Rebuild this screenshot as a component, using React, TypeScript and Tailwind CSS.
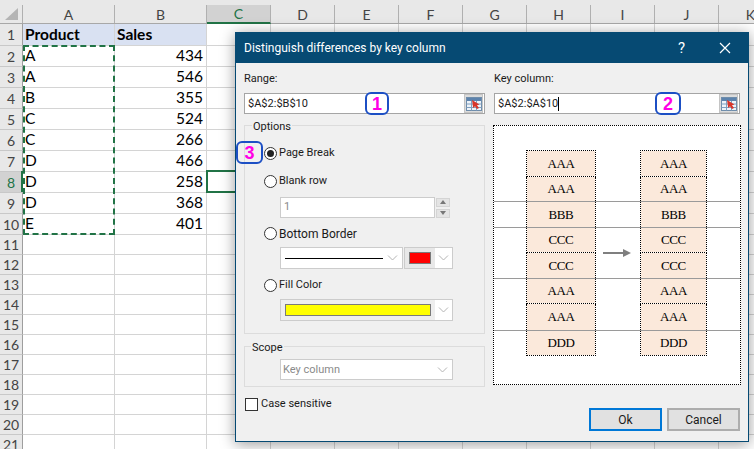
const cols = [
  { n: "A", w: "w-[92px]" },
  { n: "B", w: "w-[92px]" },
  { n: "C", w: "w-[64px]" },
  { n: "D", w: "w-[64px]" },
  { n: "E", w: "w-[64px]" },
  { n: "F", w: "w-[64px]" },
  { n: "G", w: "w-[64px]" },
  { n: "H", w: "w-[64px]" },
  { n: "I", w: "w-[64px]" },
  { n: "J", w: "w-[64px]" },
  { n: "K", w: "w-[64px]" },
];

const data: [string, string, boolean?][] = [
  ["Product", "Sales", true],
  ["A", "434"],
  ["A", "546"],
  ["B", "355"],
  ["C", "524"],
  ["C", "266"],
  ["D", "466"],
  ["D", "258"],
  ["D", "368"],
  ["E", "401"],
];

function Row({ i }: { i: number }) {
  const row = data[i - 1];
  const h = i === 1 ? "h-[22px]" : i <= 10 ? "h-[21px]" : "h-[20px]";
  return (
    <div className={`flex shrink-0 ${h}`}>
      <div
        className={`w-[23px] shrink-0 flex items-center justify-center text-[14px] border-r border-b border-r-[#9e9e9e] border-b-[#c8c8c8] ${
          i === 8 ? "bg-[#d2d2d2] text-[#217346]" : "bg-[#e8e8e8] text-[#444444]"
        }`}
      >
        {i}
      </div>
      {cols.map((c, ci) => (
        <div
          key={c.n}
          className={`${c.w} shrink-0 border-r border-b border-[#d4d4d4] flex items-center px-[2px] overflow-hidden text-[15.5px] text-black ${
            row?.[2] && ci < 2 ? "bg-[#d9e1f2] font-bold" : "bg-white"
          } ${ci === 1 && !row?.[2] ? "justify-end pr-[3px]" : ""}`}
        >
          {row && ci === 0 ? row[0] : row && ci === 1 ? row[1] : ""}
        </div>
      ))}
    </div>
  );
}

function Chevron() {
  return (
    <svg width="11" height="6" viewBox="0 0 11 6" className="shrink-0">
      <path d="M1 0.5 L5.5 5 L10 0.5" fill="none" stroke="#b4b4b4" strokeWidth="1" />
    </svg>
  );
}

function RefIcon({ className }: { className: string }) {
  return (
    <div className={`absolute w-[19px] h-[19px] bg-[#dcdcdc] border border-[#c4c4c4] flex items-center justify-center ${className}`}>
      <svg width="16" height="14" viewBox="0 0 16 14">
        <rect x="0.5" y="0.5" width="15" height="13" fill="#eef3f9" stroke="#6f8dab" />
        <rect x="1" y="1" width="14" height="3" fill="#5d83ad" />
        <path d="M0.5 7H15.5M0.5 10.5H15.5M5.5 4V13.5M10.5 4V13.5" stroke="#7f9fbf" strokeWidth="1" />
        <path d="M6 3 L13.5 7.5 L11 8.2 L13 11 L11 12 L9 9.3 L7.2 11 Z" fill="#d8352a" />
      </svg>
    </div>
  );
}

function Badge({ n, className }: { n: string; className: string }) {
  return (
    <div
      className={`absolute h-[23px] border-2 border-[#1c4fc4] rounded-[6px] flex items-center justify-center text-[#ff00e6] font-bold text-[18px] leading-none ${className}`}
      style={{ fontFamily: "'Liberation Sans', sans-serif" }}
    >
      {n}
    </div>
  );
}

function Radio({ on, label, className, labelClass }: { on?: boolean; label: string; className: string; labelClass?: string }) {
  return (
    <div className={`flex items-center h-4 ml-[19px] ${className}`}>
      <div className="w-[13px] h-[13px] rounded-full border border-[#333333] bg-white flex items-center justify-center">
        {on && <div className="w-[7px] h-[7px] rounded-full bg-[#222222]" />}
      </div>
      <span className={`ml-[2px] pt-px ${labelClass ?? ""}`}>{label}</span>
    </div>
  );
}

const previewRows = [
  { t: "AAA", h: "h-[27px]", line: "dot" },
  { t: "AAA", h: "h-[25px]", line: "gray" },
  { t: "BBB", h: "h-[26px]", line: "gray" },
  { t: "CCC", h: "h-[25px]", line: "dot" },
  { t: "CCC", h: "h-[26px]", line: "gray", arrow: true },
  { t: "AAA", h: "h-[25px]", line: "dot" },
  { t: "AAA", h: "h-[27px]", line: "gray" },
  { t: "DDD", h: "h-[25px]", line: "none" },
];

function PreviewCell({ t, line, w, first }: { t: string; line: string; w: string; first: boolean }) {
  return (
    <div
      className={`${w} shrink-0 bg-[#fbe9db] bg-clip-padding border-x border-dotted border-black flex items-center justify-center text-[13px] tracking-[-0.4px] text-black ${
        line === "dot" || line === "none" ? "border-b" : ""
      } ${first ? "border-t" : ""}`}
      style={{ fontFamily: "'Liberation Serif', serif" }}
    >
      {t}
    </div>
  );
}

export default function App() {
  const rows = Array.from({ length: 21 }, (_, i) => i + 1);
  return (
    <div
      className="relative w-[754px] h-[449px] overflow-hidden bg-white"
      style={{ fontFamily: "Lato, sans-serif" }}
    >
      <div className="flex h-[24px] bg-[#e8e8e8] border-b border-[#a8a8a8]">
        <div className="w-[23px] shrink-0 flex items-end justify-center pb-[3px] border-r border-[#b0b0b0] mt-[5px]">
          <svg width="13" height="12" viewBox="0 0 13 12">
            <path d="M13 0 V12 H0 Z" fill="#b4b4b4" />
          </svg>
        </div>
        {cols.map((c) => (
          <div
            key={c.n}
            className={`${c.w} shrink-0 mt-[5px] flex items-center justify-center text-[14px] border-r border-[#b0b0b0] ${
              c.n === "C" ? "bg-[#d2d2d2] text-[#217346] border-b-2 border-b-[#217346] -mb-px" : "text-[#444444]"
            }`}
          >
            {c.n}
          </div>
        ))}
      </div>
      <div className="flex flex-col">
        {rows.map((i) => (
          <Row key={i} i={i} />
        ))}
      </div>

      {/* marching ants on A2:A10 and the active cell C8 */}
      <div className="absolute left-[23px] top-[45px] w-[92px] h-[190px] border-2 border-dashed border-[#217346]" />
      <div className="absolute left-[206px] top-[170px] w-[66px] h-[23px] border-2 border-[#217346]" />
      <div className="absolute left-[21px] top-[171px] w-[2px] h-[21px] bg-[#217346]" />

      {/* dialog */}
      <div
        className="absolute left-[235px] top-[32px] w-[514px] h-[410px] bg-[#f0f0f0] border border-[#064a73] shadow-[0_2px_14px_rgba(0,0,0,0.4)] text-[11px] text-[#1a1a1a] flex flex-col"
        style={{ fontFamily: "Roboto, sans-serif" }}
      >
        <div className="h-[30px] shrink-0 bg-[#064a73] text-white flex items-center pl-[8px] text-[12px]">
          <span className="flex-1">Distinguish differences by key column</span>
          <span className="text-[15px] mr-[34px]">?</span>
          <svg width="12" height="12" viewBox="0 0 12 12" className="mr-[17px]">
            <path d="M1 1 L11 11 M11 1 L1 11" stroke="white" strokeWidth="1.2" />
          </svg>
        </div>
        <div className="flex pl-[8px] gap-[8px]">
          {/* left */}
          <div className="w-[241px] shrink-0 flex flex-col">
            <div className="h-4 mt-[8px]">Range:</div>
            <div className="relative h-[21px] mt-[6px] bg-white border border-[#a5a5a5] flex items-center pl-[3px] pt-px">
              $A$2:$B$10
              <Badge n="1" className="left-[120px] -top-[2px] w-[24px]" />
              <RefIcon className="right-[1px] top-0" />
            </div>
            <div className="relative h-[209px] mt-[11px] border border-[#dcdcdc] flex flex-col">
              <div className="h-4 -mt-[7px] ml-[7px] px-[1px] w-fit bg-[#f0f0f0]">Options</div>
              <Radio on label="Page Break" className="mt-[10px]" />
              <Badge n="3" className="-left-[9px] top-[15px] w-[27px]" />
              <Radio label="Blank row" className="mt-[12px]" />
              <div className="flex mt-[8px] ml-[35px] gap-[1px]">
                <div className="w-[155px] h-[21px] bg-white border border-[#cccccc] flex items-center pl-[3px] text-[#8a8a8a]">1</div>
                <div className="flex flex-col justify-center gap-[2px] w-[14px]">
                  <div className="h-[9px] bg-[#e4e4e4] border border-[#d4d4d4] flex items-center justify-center">
                    <div className="w-0 h-0 border-x-[3px] border-x-transparent border-b-[4px] border-b-[#777777]" />
                  </div>
                  <div className="h-[9px] bg-[#e4e4e4] border border-[#d4d4d4] flex items-center justify-center">
                    <div className="w-0 h-0 border-x-[3px] border-x-transparent border-t-[4px] border-t-[#777777]" />
                  </div>
                </div>
              </div>
              <Radio label="Bottom Border" labelClass="text-[12px]" className="mt-[7px]" />
              <div className="flex mt-[6px] ml-[35px] gap-[1px]">
                <div className="w-[123px] h-[22px] bg-white border border-[#cccccc] flex items-center pl-[4px] pr-[3px]">
                  <div className="w-[98px] h-px bg-black" />
                  <div className="flex-1 flex justify-end pr-px"><Chevron /></div>
                </div>
                <div className="w-[49px] h-[22px] bg-[#e8e8e8] border border-[#cccccc] flex items-center">
                  <div className="h-full flex items-center px-[4px]">
                    <div className="w-[22px] h-[12px] bg-[#ff0000] border border-[#7a7a7a]" />
                  </div>
                  <div className="flex-1 h-full bg-white flex items-center justify-center"><Chevron /></div>
                </div>
              </div>
              <Radio label="Fill Color" className="mt-[8px]" />
              <div className="mt-[6px] ml-[35px] w-[173px] h-[22px] bg-[#eeeeee] border border-[#cccccc] flex items-center">
                <div className="flex-1 h-full flex items-center pl-[4px] pr-[4px]">
                  <div className="w-full h-[12px] bg-[#ffff00] border border-[#7a7a7a]" />
                </div>
                <div className="w-[17px] h-full bg-white flex items-center justify-center shrink-0"><Chevron /></div>
              </div>
            </div>
            <div className="h-[41px] mt-[12px] border border-[#dcdcdc] flex flex-col">
              <div className="h-4 -mt-[7px] ml-[6px] px-[1px] w-fit bg-[#f0f0f0]">Scope</div>
              <div className="mt-[3px] ml-[35px] w-[173px] h-[21px] bg-white border border-[#cccccc] flex items-center justify-between pl-[2px] pr-[4px] pt-px text-[#8a8a8a]">
                Key column
                <Chevron />
              </div>
            </div>
            <div className="flex items-center h-4 mt-[9px] ml-px">
              <div className="w-[13px] h-[13px] bg-white border border-[#333333]" />
              <span className="ml-[3px] pt-px">Case sensitive</span>
            </div>
          </div>
          {/* right */}
          <div className="w-[248px] shrink-0 flex flex-col">
            <div className="h-4 mt-[8px] ml-px">Key column:</div>
            <div className="relative h-[21px] mt-[6px] mx-px bg-white border border-[#a5a5a5] flex items-center pl-[3px] pt-px">
              $A$2:$A$10
              <div className="w-px h-[14px] bg-black" />
              <Badge n="2" className="left-[160px] -top-[2px] w-[26px]" />
              <RefIcon className="right-[1px] top-0" />
            </div>
            <div className="h-[260px] mt-[11px] bg-white border border-dotted border-black pt-[24px] flex flex-col">
              {previewRows.map((r, i) => (
                <div
                  key={i}
                  className={`flex shrink-0 ${r.h} pl-[32px] ${r.line === "gray" ? "border-b border-[#9a9a9a]" : ""}`}
                >
                  <PreviewCell t={r.t} line={r.line} w="w-[70px]" first={i === 0} />
                  <div className="w-[44px] shrink-0 relative flex justify-center">
                    {r.arrow && (
                      <svg width="30" height="10" viewBox="0 0 30 10" className="-mt-[5px]">
                        <path d="M0 5 H22" stroke="#7f7f7f" strokeWidth="2" />
                        <path d="M20 1 L28 5 L20 9 Z" fill="#7f7f7f" />
                      </svg>
                    )}
                  </div>
                  <PreviewCell t={r.t} line={r.line} w="w-[67px]" first={i === 0} />
                </div>
              ))}
            </div>
            <div className="flex justify-end gap-[5px] mt-[23px] pr-px">
              <button className="w-[73px] h-[23px] bg-[#e1e1e1] border-2 border-[#0078d7] text-[12px] text-[#1a1a1a]">Ok</button>
              <button className="w-[73px] h-[23px] bg-[#e1e1e1] border-2 border-[#adadad] text-[12px] text-[#1a1a1a]">Cancel</button>
            </div>
          </div>
        </div>
      </div>
    </div>
  );
}
